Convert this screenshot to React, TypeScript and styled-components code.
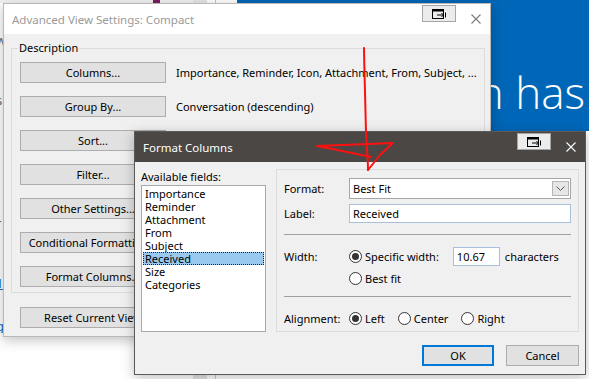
import React from 'react';
import styled, { createGlobalStyle } from 'styled-components';

const GlobalStyle = createGlobalStyle`
  html, body {
    margin: 0;
    padding: 0;
    background: #fff;
  }
  body {
    font-family: "Noto Sans", "Open Sans", sans-serif;
    font-size: 11px;
    color: #000;
  }
`;

const Desktop = styled.div`
  position: relative;
  width: 589px;
  height: 379px;
  overflow: hidden;
  background: #fff;
`;

/* ---------- the app behind the dialogs ---------- */

const Backdrop = styled.div`
  display: flex;
  height: 100%;
`;
const NavPane = styled.div`
  width: 237px;
  flex: none;
  display: flex;
`;
const NavList = styled.div`
  width: 193px;
  display: flex;
  flex-direction: column;
`;
const TopStrip = styled.div`
  height: 3px;
  flex: none;
  background: #f2f2f2;
  display: flex;
`;
const AccentTab = styled.span`
  margin-left: 153px;
  width: 7px;
  background: #7a1f5c;
`;
const Fragment = styled.span<{ $gap: number; $link?: boolean }>`
  margin-top: ${(p) => p.$gap}px;
  width: 3px;
  overflow: hidden;
  white-space: nowrap;
  line-height: 14px;
  font-size: 13px;
  color: ${(p) => (p.$link ? '#1a6fc2' : '#6b6b6b')};
  text-decoration: ${(p) => (p.$link ? 'underline' : 'none')};
  & > span {
    margin-left: -4px;
  }
`;
const ScrollTrack = styled.div`
  width: 14px;
  background: #e6e6e6;
`;
const PaneDivider = styled.div`
  width: 1px;
  margin-left: 8px;
  background: #c8c8c8;
`;
const ReadingPane = styled.div`
  flex: 1;
  display: flex;
  flex-direction: column;
`;
const BlueHeader = styled.div`
  height: 131px;
  background: #0067b8;
  display: flex;
  justify-content: flex-end;
  overflow: hidden;
  padding: 70px 4px 0 0;
  box-sizing: border-box;
`;
const HeroText = styled.div`
  flex: none;
  font-family: "Open Sans", "Noto Sans", sans-serif;
  font-weight: 300;
  font-size: 44px;
  line-height: 44px;
  color: #fff;
  white-space: nowrap;
`;

/* ---------- window chrome ---------- */

const Win = styled.div<{ $left: number; $top: number; $w: number; $h: number; $dark?: boolean }>`
  position: absolute;
  left: ${(p) => p.$left}px;
  top: ${(p) => p.$top}px;
  width: ${(p) => p.$w}px;
  height: ${(p) => p.$h}px;
  box-sizing: border-box;
  display: flex;
  flex-direction: column;
  background: #f0f0f0;
  border: 1px solid ${(p) => (p.$dark ? '#5c5a58' : '#b9b9b9')};
  box-shadow: 0 3px 12px rgba(0, 0, 0, 0.25);
`;
const TitleBar = styled.div<{ $dark?: boolean }>`
  height: 30px;
  flex: none;
  display: flex;
  align-items: center;
  padding-left: 8px;
  background: ${(p) => (p.$dark ? '#4a4744' : '#fff')};
  color: ${(p) => (p.$dark ? '#fff' : '#9a9a9a')};
`;
const TitleText = styled.div`
  flex: 1;
  font-size: 11.5px;
  white-space: nowrap;
`;
const PopButton = styled.div`
  align-self: flex-start;
  margin-top: 1px;
  width: 34px;
  height: 17px;
  box-sizing: border-box;
  background: #ececec;
  border: 1px solid #a6a6a6;
  display: flex;
  align-items: center;
  justify-content: center;
`;
const CloseBox = styled.div`
  margin: 0 9px 0 15px;
  width: 10px;
  height: 10px;
  display: flex;
`;

const PopIcon = () => (
  <svg width="16" height="12" viewBox="0 0 16 12">
    <rect x="1.5" y="1.5" width="11" height="9" fill="none" stroke="#000" />
    <rect x="1" y="1" width="12" height="2.5" fill="#000" />
    <path d="M6 7 H12.5 M10.5 5 L12.5 7 L10.5 9" fill="none" stroke="#000" />
    <path d="M14.5 4.5 V9.5" stroke="#000" />
  </svg>
);

const CloseIcon = ({ color }: { color: string }) => (
  <svg width="10" height="10" viewBox="0 0 10 10">
    <path d="M0.5 0.5 L9.5 9.5 M9.5 0.5 L0.5 9.5" stroke={color} strokeWidth="1.1" />
  </svg>
);

/* ---------- Advanced View Settings ---------- */

const AdvBody = styled.div`
  flex: 1;
  padding: 6px 5px 9px 7px;
  display: flex;
  flex-direction: column;
`;
const GroupBox = styled.fieldset`
  margin: 0;
  padding: 6px 8px 5px;
  border: 1px solid #dcdcdc;
  display: flex;
  flex-direction: column;
  gap: 13px;
  min-width: 0;
`;
const GroupLegend = styled.legend`
  padding: 0 1px;
  margin-left: -2px;
  line-height: 16px;
  color: #000;
`;
const SettingRow = styled.div`
  display: flex;
  align-items: center;
  gap: 10px;
`;
const WinButton = styled.div<{ $w: number; $default?: boolean }>`
  width: ${(p) => p.$w}px;
  height: 21px;
  flex: none;
  box-sizing: border-box;
  background: #e1e1e1;
  border: ${(p) => (p.$default ? '2px solid #0078d7' : '1px solid #adadad')};
  display: flex;
  align-items: center;
  justify-content: center;
  white-space: nowrap;
  overflow: hidden;
  line-height: 16px;
`;
const SettingValue = styled.span`
  white-space: nowrap;
`;
const ResetRow = styled.div`
  margin: 14px 0 0 9px;
  display: flex;
`;

/* ---------- Format Columns ---------- */

const FmtBody = styled.div`
  flex: 1;
  padding: 7px 6px 8px;
  display: flex;
  flex-direction: column;
`;
const FmtMain = styled.div`
  display: flex;
  gap: 10px;
  height: 163px;
`;
const FieldsColumn = styled.div`
  width: 125px;
  display: flex;
  flex-direction: column;
`;
const SmallLabel = styled.div`
  line-height: 16px;
  white-space: nowrap;
`;
const ListBox = styled.div`
  flex: 1;
  background: #fff;
  border: 1px solid #a9a9a9;
  padding-top: 1px;
  display: flex;
  flex-direction: column;
`;
const ListItem = styled.div<{ $selected?: boolean }>`
  height: 13px;
  line-height: 13px;
  margin: 0 1px;
  padding-left: 2px;
  box-sizing: border-box;
  background: ${(p) => (p.$selected ? '#99c9ef' : 'transparent')};
  outline: ${(p) => (p.$selected ? '1px dotted #222' : 'none')};
  outline-offset: -1px;
  white-space: nowrap;
`;
const PropsPanel = styled.div`
  width: 303px;
  box-sizing: border-box;
  border: 1px solid #dcdcdc;
  padding: 8px 7px 0;
  display: flex;
  flex-direction: column;
`;
const FieldRow = styled.div<{ $gap: number; $h: number }>`
  margin-top: ${(p) => p.$gap}px;
  height: ${(p) => p.$h}px;
  display: grid;
  grid-template-columns: 65px 1fr;
  align-items: center;
`;
const Inline = styled.div<{ $gap: number }>`
  display: flex;
  align-items: center;
  gap: ${(p) => p.$gap}px;
  white-space: nowrap;
`;
const Combo = styled.div`
  height: 21px;
  box-sizing: border-box;
  background: #fff;
  border: 1px solid #a6a6a6;
  display: flex;
  align-items: center;
  padding: 0 1px 0 3px;
`;
const ComboText = styled.span`
  flex: 1;
`;
const DropButton = styled.div`
  width: 17px;
  height: 15px;
  box-sizing: border-box;
  background: #e6e6e6;
  border: 1px solid #b4b4b4;
  display: flex;
  align-items: center;
  justify-content: center;
`;
const TextBox = styled.div<{ $w?: number }>`
  height: 19px;
  width: ${(p) => (p.$w ? `${p.$w}px` : 'auto')};
  box-sizing: border-box;
  background: #fff;
  border: 1px solid #a8c0dc;
  padding-left: 3px;
  display: flex;
  align-items: center;
`;
const Separator = styled.div<{ $gap: number }>`
  margin-top: ${(p) => p.$gap}px;
  height: 1px;
  background: #a0a0a0;
  flex: none;
`;
const RadioOption = styled.div`
  display: flex;
  align-items: center;
  gap: 3px;
  white-space: nowrap;
`;
const RadioCircle = styled.span<{ $checked?: boolean }>`
  width: 13px;
  height: 13px;
  box-sizing: border-box;
  border-radius: 50%;
  border: 1px solid #333;
  background: #fff;
  display: inline-flex;
  align-items: center;
  justify-content: center;
  &::after {
    content: '';
    width: 7px;
    height: 7px;
    border-radius: 50%;
    background: ${(p) => (p.$checked ? '#333' : 'transparent')};
  }
`;
const FmtButtons = styled.div`
  margin-top: 13px;
  display: flex;
  justify-content: flex-end;
  gap: 12px;
`;

const Annotation = styled.svg`
  position: absolute;
  left: 0;
  top: 0;
  pointer-events: none;
`;

const Radio = ({ label, checked }: { label: string; checked?: boolean }) => (
  <RadioOption>
    <RadioCircle $checked={checked} />
    <span>{label}</span>
  </RadioOption>
);

const settings = [
  { label: 'Columns...', value: 'Importance, Reminder, Icon, Attachment, From, Subject, ...' },
  { label: 'Group By...', value: 'Conversation (descending)' },
  { label: 'Sort...', value: '' },
  { label: 'Filter...', value: '' },
  { label: 'Other Settings...', value: '' },
  { label: 'Conditional Formatting...', value: '' },
  { label: 'Format Columns...', value: '' },
];

const fields = ['Importance', 'Reminder', 'Attachment', 'From', 'Subject', 'Received', 'Size', 'Categories'];

const fragments = [
  { text: 'w', gap: 30, link: false },
  { text: 's', gap: 46, link: false },
  { text: 'j', gap: 51, link: false },
  { text: 'r', gap: 44, link: false },
  { text: '1', gap: 46, link: true },
  { text: 'g', gap: 29, link: true },
];

export default function App() {
  return (
    <>
      <GlobalStyle />
      <Desktop>
        <Backdrop>
          <NavPane>
            <NavList>
              <TopStrip>
                <AccentTab />
              </TopStrip>
              {fragments.map((f) => (
                <Fragment key={f.text} $gap={f.gap} $link={f.link}>
                  <span>{f.text}</span>
                </Fragment>
              ))}
            </NavList>
            <ScrollTrack />
            <PaneDivider />
          </NavPane>
          <ReadingPane>
            <BlueHeader>
              <HeroText>tion has</HeroText>
            </BlueHeader>
          </ReadingPane>
        </Backdrop>

        <Win $left={3} $top={3} $w={488} $h={334}>
          <TitleBar>
            <TitleText>Advanced View Settings: Compact</TitleText>
            <PopButton>
              <PopIcon />
            </PopButton>
            <CloseBox>
              <CloseIcon color="#7a7a7a" />
            </CloseBox>
          </TitleBar>
          <AdvBody>
            <GroupBox>
              <GroupLegend>Description</GroupLegend>
              {settings.map((s) => (
                <SettingRow key={s.label}>
                  <WinButton $w={146}>{s.label}</WinButton>
                  <SettingValue>{s.value}</SettingValue>
                </SettingRow>
              ))}
            </GroupBox>
            <ResetRow>
              <WinButton $w={146}>Reset Current View</WinButton>
            </ResetRow>
          </AdvBody>
        </Win>

        <Win $left={134} $top={131} $w={452} $h={244} $dark>
          <TitleBar $dark>
            <TitleText>Format Columns</TitleText>
            <PopButton>
              <PopIcon />
            </PopButton>
            <CloseBox>
              <CloseIcon color="#ffffff" />
            </CloseBox>
          </TitleBar>
          <FmtBody>
            <FmtMain>
              <FieldsColumn>
                <SmallLabel>Available fields:</SmallLabel>
                <ListBox>
                  {fields.map((f) => (
                    <ListItem key={f} $selected={f === 'Received'}>
                      {f}
                    </ListItem>
                  ))}
                </ListBox>
              </FieldsColumn>
              <PropsPanel>
                <FieldRow $gap={0} $h={21}>
                  <span>Format:</span>
                  <Combo>
                    <ComboText>Best Fit</ComboText>
                    <DropButton>
                      <svg width="9" height="5" viewBox="0 0 9 5">
                        <path d="M0.5 0.5 L4.5 4.5 L8.5 0.5" fill="none" stroke="#555" />
                      </svg>
                    </DropButton>
                  </Combo>
                </FieldRow>
                <FieldRow $gap={5} $h={19}>
                  <span>Label:</span>
                  <TextBox>Received</TextBox>
                </FieldRow>
                <Separator $gap={11} />
                <FieldRow $gap={12} $h={19}>
                  <span>Width:</span>
                  <Inline $gap={14}>
                    <Radio label="Specific width:" checked />
                    <Inline $gap={5}>
                      <TextBox $w={47}>10.67</TextBox>
                      <span>characters</span>
                    </Inline>
                  </Inline>
                </FieldRow>
                <FieldRow $gap={5} $h={13}>
                  <span />
                  <Radio label="Best fit" />
                </FieldRow>
                <Separator $gap={12} />
                <FieldRow $gap={14} $h={13}>
                  <span>Alignment:</span>
                  <Inline $gap={13}>
                    <Radio label="Left" checked />
                    <Radio label="Center" />
                    <Radio label="Right" />
                  </Inline>
                </FieldRow>
              </PropsPanel>
            </FmtMain>
            <FmtButtons>
              <WinButton $w={72} $default>OK</WinButton>
              <WinButton $w={73}>Cancel</WinButton>
            </FmtButtons>
          </FmtBody>
        </Win>

        <Annotation width="589" height="379" viewBox="0 0 589 379">
          <path
            d="M364 48 C364.5 80 365.5 115 366 132 C366.5 145 368 158 368 170"
            fill="none"
            stroke="#ff1010"
            strokeWidth="2"
            strokeLinecap="round"
          />
          <path
            d="M317 146 L393 143 L380 155 L368 170 M317 146 C334 149 352 153 371 157"
            fill="none"
            stroke="#ff1010"
            strokeWidth="2"
            strokeLinejoin="round"
            strokeLinecap="round"
          />
        </Annotation>
      </Desktop>
    </>
  );
}
